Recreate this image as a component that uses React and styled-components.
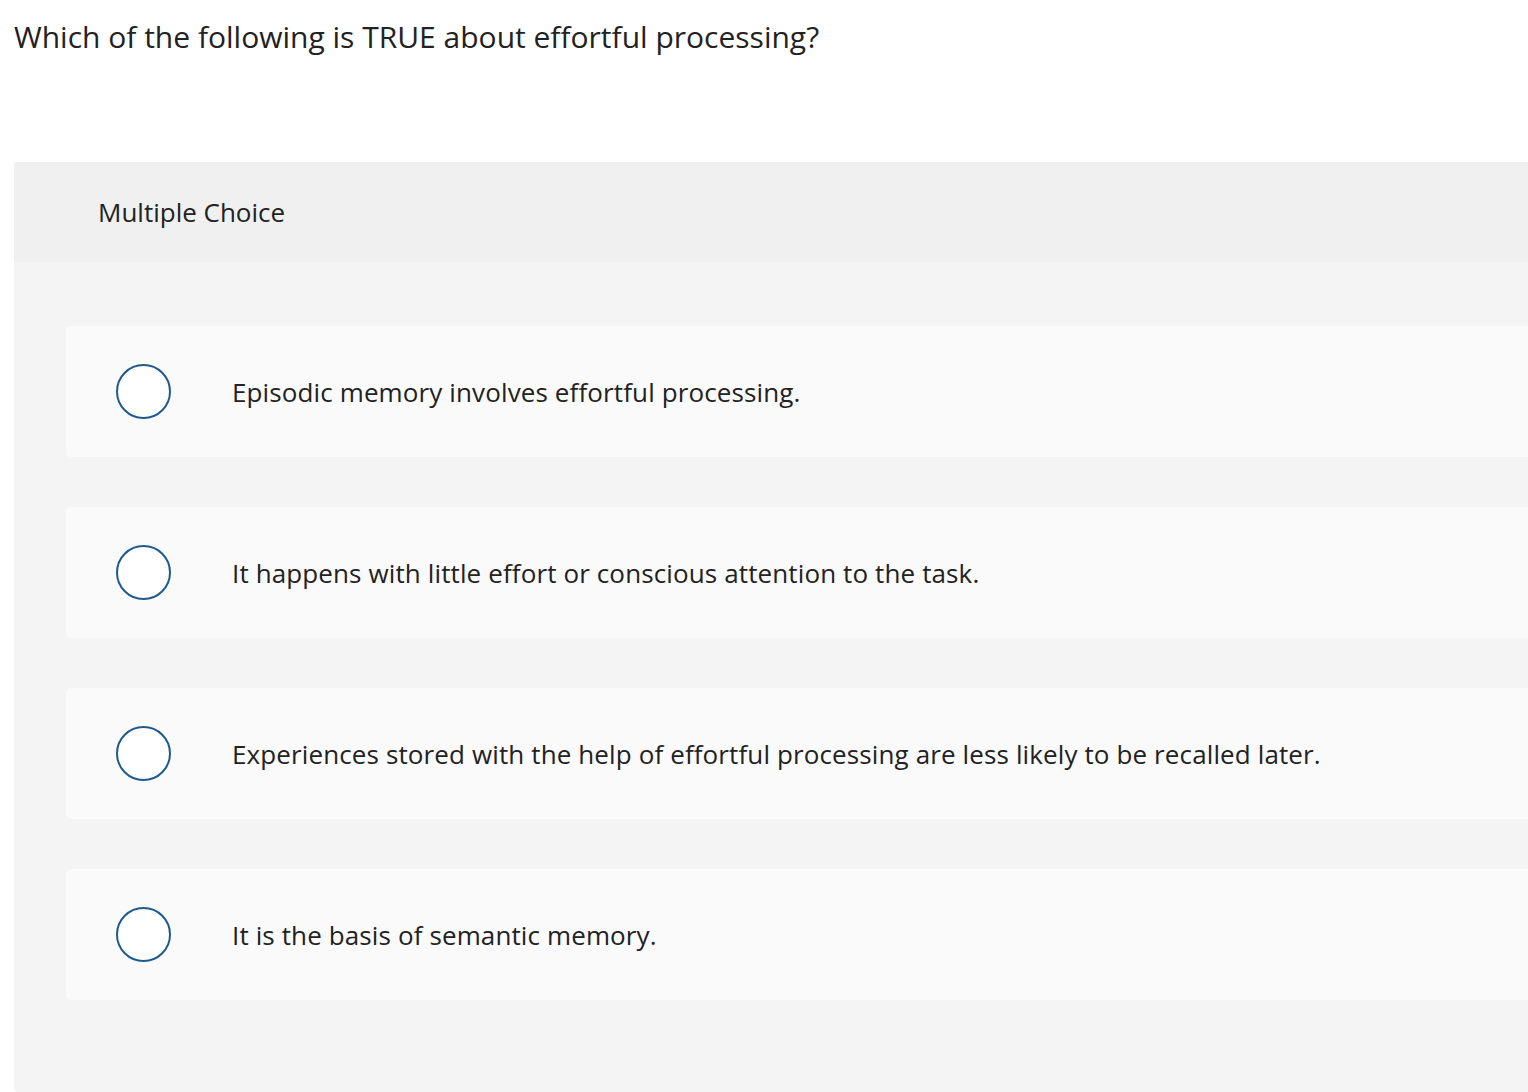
import React from "react";
import styled, { createGlobalStyle } from "styled-components";

const GlobalStyle = createGlobalStyle`
  body {
    margin: 0;
    background: #fff;
    font-family: "Open Sans", "Lato", sans-serif;
    color: #222;
  }
`;

const Page = styled.div`
  padding: 20px 0 0 14px;
`;

const Question = styled.h1`
  margin: 0;
  font-size: 30px;
  font-weight: 400;
  line-height: 34px;
  color: #222;
`;

const Panel = styled.section`
  margin-top: 108px;
  border-radius: 4px 0 0 4px;
  overflow: hidden;
  background: #f4f4f4;
  min-height: 930px;
`;

const PanelHeader = styled.div`
  height: 100px;
  background: #f0f0f0;
  display: flex;
  align-items: center;
  padding-left: 84px;
  font-size: 26px;
  color: #222;
`;

const Options = styled.div`
  display: flex;
  flex-direction: column;
  gap: 50px;
  padding: 64px 0 0 52px;
`;

const Option = styled.label`
  display: flex;
  align-items: center;
  height: 131px;
  background: #fafafa;
  border-radius: 5px 0 0 5px;
  padding-left: 50px;
  cursor: pointer;
`;

const Radio = styled.span`
  width: 51px;
  height: 51px;
  border: 2px solid #1f5a8c;
  border-radius: 50%;
  background: #fff;
  flex-shrink: 0;
`;

const OptionText = styled.span`
  margin-left: 61px;
  font-size: 26px;
  letter-spacing: 0.12px;
  color: #222;
`;

const choices = [
  "Episodic memory involves effortful processing.",
  "It happens with little effort or conscious attention to the task.",
  "Experiences stored with the help of effortful processing are less likely to be recalled later.",
  "It is the basis of semantic memory.",
];

const App = () => {
  return (
    <Page>
      <GlobalStyle />
      <Question>Which of the following is TRUE about effortful processing?</Question>
      <Panel>
        <PanelHeader>Multiple Choice</PanelHeader>
        <Options>
          {choices.map((c) => (
            <Option key={c}>
              <Radio />
              <OptionText>{c}</OptionText>
            </Option>
          ))}
        </Options>
      </Panel>
    </Page>
  );
};

export default App;
